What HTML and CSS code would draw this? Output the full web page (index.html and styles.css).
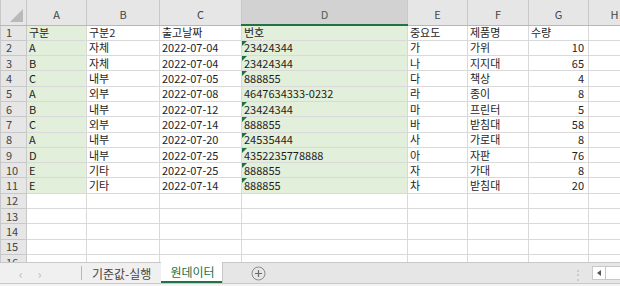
FILE: index.html
```html
<!DOCTYPE html>
<html>
	<head>
		<meta charset="utf-8">
		<title>원데이터</title>
		<link rel="stylesheet" href="styles.css">
	</head>
	<body>
		<div class="book">
			<div class="grid">
				<table class="sheet">
					<colgroup>
						<col class="c-head">
						<col class="c-a">
						<col class="c-b">
						<col class="c-c">
						<col class="c-d">
						<col class="c-e">
						<col class="c-f">
						<col class="c-g">
						<col class="c-h">
					</colgroup>
					<tr class="cols">
						<th class="corner"><span class="tri"></span></th>
						<th>A</th><th>B</th><th>C</th><th class="sel">D</th><th>E</th><th>F</th><th>G</th><th>H</th>
					</tr>
					<tr><th>1</th><td class="hl">구분</td><td>구분2</td><td>출고날짜</td><td class="hl">번호</td><td>중요도</td><td>제품명</td><td>수량</td><td></td></tr>
					<tr><th>2</th><td class="hl">A</td><td>자체</td><td>2022-07-04</td><td class="hl err">23424344</td><td>가</td><td>가위</td><td class="num">10</td><td></td></tr>
					<tr><th>3</th><td class="hl">B</td><td>자체</td><td>2022-07-04</td><td class="hl err">23424344</td><td>나</td><td>지지대</td><td class="num">65</td><td></td></tr>
					<tr><th>4</th><td class="hl">C</td><td>내부</td><td>2022-07-05</td><td class="hl err">888855</td><td>다</td><td>책상</td><td class="num">4</td><td></td></tr>
					<tr><th>5</th><td class="hl">A</td><td>외부</td><td>2022-07-08</td><td class="hl">4647634333-0232</td><td>라</td><td>종이</td><td class="num">8</td><td></td></tr>
					<tr><th>6</th><td class="hl">B</td><td>내부</td><td>2022-07-12</td><td class="hl err">23424344</td><td>마</td><td>프린터</td><td class="num">5</td><td></td></tr>
					<tr><th>7</th><td class="hl">C</td><td>외부</td><td>2022-07-14</td><td class="hl err">888855</td><td>바</td><td>받침대</td><td class="num">58</td><td></td></tr>
					<tr><th>8</th><td class="hl">A</td><td>내부</td><td>2022-07-20</td><td class="hl err">24535444</td><td>사</td><td>가로대</td><td class="num">8</td><td></td></tr>
					<tr><th>9</th><td class="hl">D</td><td>내부</td><td>2022-07-25</td><td class="hl err">4352235778888</td><td>아</td><td>자판</td><td class="num">76</td><td></td></tr>
					<tr><th>10</th><td class="hl">E</td><td>기타</td><td>2022-07-25</td><td class="hl err">888855</td><td>자</td><td>가대</td><td class="num">8</td><td></td></tr>
					<tr><th>11</th><td class="hl">E</td><td>기타</td><td>2022-07-14</td><td class="hl err">888855</td><td>차</td><td>받침대</td><td class="num">20</td><td></td></tr>
					<tr><th>12</th><td></td><td></td><td></td><td></td><td></td><td></td><td></td><td></td></tr>
					<tr><th>13</th><td></td><td></td><td></td><td></td><td></td><td></td><td></td><td></td></tr>
					<tr><th>14</th><td></td><td></td><td></td><td></td><td></td><td></td><td></td><td></td></tr>
					<tr><th>15</th><td></td><td></td><td></td><td></td><td></td><td></td><td></td><td></td></tr>
					<tr><th>16</th><td></td><td></td><td></td><td></td><td></td><td></td><td></td><td></td></tr>
				</table>
			</div>

			<div class="tabbar">
				<div class="nav">
					<span class="arrow">&#8249;</span>
					<span class="arrow">&#8250;</span>
				</div>
				<div class="tab">기준값-실행</div>
				<div class="tab active">원데이터</div>
				<div class="rest">
					<span class="add">
						<svg width="15" height="15" viewBox="0 0 15 15">
							<circle cx="7.5" cy="7.5" r="6.5" fill="none" stroke="#8a8a8a" stroke-width="1"/>
							<path d="M7.5 4v7M4 7.5h7" stroke="#6a6a6a" stroke-width="1.2"/>
						</svg>
					</span>
					<span class="grip">&#8942;</span>
					<div class="hscroll">
						<span class="sbtn">
							<svg width="5" height="6" viewBox="0 0 5 6"><path d="M4 0v6L0 3z" fill="#555"/></svg>
						</span>
					</div>
				</div>
			</div>
			<div class="status"></div>
		</div>
	</body>
</html>
```

FILE: styles.css
```css
* {
	margin: 0;
	padding: 0;
	box-sizing: border-box;
}

body {
	background: #ffffff;
	font-family: "Noto Sans CJK KR", "Noto Sans", sans-serif;
	font-size: 11px;
	color: #1e1e1e;
}

.book {
	width: 620px;
	height: 286px;
	overflow: hidden;
	display: flex;
	flex-direction: column;
}

.grid {
	height: 262px;
	overflow: hidden;
}

.sheet {
	border-collapse: collapse;
	table-layout: fixed;
	width: 640px;
}

.c-head { width: 26px; }
.c-a { width: 60px; }
.c-b { width: 73px; }
.c-c { width: 82px; }
.c-d { width: 166px; }
.c-e { width: 60px; }
.c-f { width: 61px; }
.c-g { width: 60px; }
.c-h { width: 52px; }

.sheet tr {
	height: 15.3px;
}

.sheet tr.cols {
	height: 25px;
}

.sheet td,
.sheet th {
	border: 1px solid #d9d9d9;
	white-space: nowrap;
	overflow: hidden;
	line-height: 13px;
	padding: 0 2px;
	font-weight: normal;
}

.sheet th {
	background: #e6e6e6;
	color: #444444;
	border-color: #c8c8c8;
	text-align: left;
	padding-left: 5px;
}

.sheet tr.cols th {
	text-align: center;
	padding: 4px 0 0;
	border-top: none;
	border-bottom-color: #b8b8b8;
	color: #444444;
}

.sheet tr.cols th.sel {
	background: #d2d2d2;
	color: #4f5f55;
	border-bottom: 2px solid #217346;
}

.corner {
	position: relative;
}

.tri {
	position: absolute;
	right: 3px;
	bottom: 3px;
	width: 0;
	height: 0;
	border-left: 13px solid transparent;
	border-bottom: 13px solid #b9b9b9;
}

.sheet td.hl {
	background: #e2efda;
}

.sheet td.num {
	text-align: right;
	padding-right: 4px;
}

.sheet td.err {
	position: relative;
}

.sheet td.err::before {
	content: "";
	position: absolute;
	left: 0;
	top: 0;
	border-top: 5px solid #1e7145;
	border-right: 5px solid transparent;
}

.tabbar {
	height: 22px;
	display: flex;
	background: #f0f0f0;
	border-top: 1px solid #c8c8c8;
	border-bottom: 1px solid #c8c8c8;
}

.nav {
	width: 82px;
	display: flex;
	gap: 15px;
	padding-left: 19px;
	align-items: center;
	color: #b8b8b8;
	font-size: 12px;
	border-right: 1px solid #b8b8b8;
	margin: 3px 0;
}

.tab {
	padding: 0 10px;
	display: flex;
	align-items: center;
	color: #444444;
	font-size: 12px;
}

.tab.active {
	background: #ffffff;
	color: #217346;
	border-bottom: 2px solid #217346;
	margin-top: -1px;
	padding: 0 7px 0 9px;
}

.rest {
	flex: 1;
	display: flex;
	align-items: center;
	background: #e6e6e6;
	border-left: 1px solid #c8c8c8;
}

.add {
	display: flex;
	margin-left: 28px;
}

.grip {
	margin-left: auto;
	color: #bdbdbd;
	font-size: 12px;
	margin-right: 8px;
}

.hscroll {
	width: 28px;
	height: 14px;
	background: #ffffff;
	border: 1px solid #c8c8c8;
	border-right: none;
	display: flex;
}

.sbtn {
	width: 13px;
	display: flex;
	align-items: center;
	justify-content: center;
	border-right: 1px solid #c8c8c8;
}

.status {
	flex: 1;
	background: #f3f3f3;
}
```
